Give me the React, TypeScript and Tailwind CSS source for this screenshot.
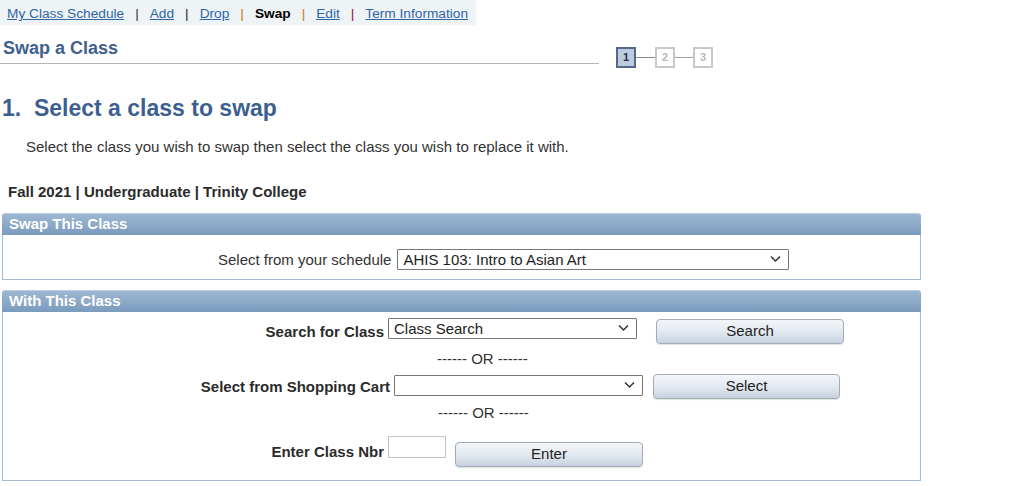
import React from "react";

function Chevron() {
  return (
    <svg
      className="pointer-events-none absolute right-[8px] top-1/2 -translate-y-1/2"
      width="11"
      height="7"
      viewBox="0 0 11 7"
    >
      <path d="M1 1 L5.5 5.5 L10 1" fill="none" stroke="#333" strokeWidth="1.5" />
    </svg>
  );
}

function Select({ w, h, value }: { w: string; h: string; value: string }) {
  return (
    <div className={`relative ${w} ${h}`}>
      <div className="h-full w-full border border-[#767676] bg-white pl-[5px] pr-[22px] flex items-center text-[15px] text-[#222] leading-none rounded-[1px]">
        {value}
      </div>
      <Chevron />
    </div>
  );
}

function Btn({ label, w }: { label: string; w: string }) {
  return (
    <div
      className={`${w} h-[25px] rounded-[4px] border border-[#a3acb6] bg-gradient-to-b from-[#f3f6f9] via-[#e3e9f0] to-[#c8d3df] shadow-[0_1px_1px_rgba(0,0,0,0.12)] flex items-center justify-center text-[15px] text-[#222]`}
    >
      {label}
    </div>
  );
}

function PanelHeader({ title }: { title: string }) {
  return (
    <div className="h-[22px] rounded-t-[3px] bg-gradient-to-b from-[#9db7d1] to-[#7b9bbd] pl-[7px] flex items-center text-white font-bold text-[15px] border-t border-[#b9cde0]">
      {title}
    </div>
  );
}

export default function App() {
  const sep = "mx-[11px]";
  return (
    <div className="w-[1033px] h-[486px] bg-white font-['Liberation_Sans',Arial,sans-serif] text-[15px] text-[#333] overflow-hidden">
      {/* nav */}
      <div className="w-[476px] h-[25px] bg-[#eef3f5] pl-[7px] flex items-center text-[13.7px] pt-[4px]">
        <a className="text-[#2e65a8] underline">My Class Schedule</a>
        <span className={`${sep} text-[#333]`}>|</span>
        <a className="text-[#2e65a8] underline">Add</a>
        <span className={`${sep} text-[#222]`}>|</span>
        <a className="text-[#2e65a8] underline">Drop</a>
        <span className={`${sep} text-[#c27a1a]`}>|</span>
        <span className="font-bold text-black">Swap</span>
        <span className={`${sep} text-[#c27a1a]`}>|</span>
        <a className="text-[#2e65a8] underline">Edit</a>
        <span className={`${sep} text-[#8b1538]`}>|</span>
        <a className="text-[#2e65a8] underline">Term Information</a>
      </div>

      {/* title row */}
      <div className="flex items-start mt-[12px]">
        <div className="w-[599px] border-b border-[#b5b5b5] pl-[3px] pb-[4px] text-[18px] leading-[22px] font-bold text-[#40608e]">
          Swap a Class
        </div>
        <div className="ml-[17px] mt-[10px] flex items-center">
          <div className="w-[20px] h-[21px] border-2 border-[#52698c] bg-[#bdcbdd] flex items-center justify-center text-[11px] font-bold text-[#1f2f4f] leading-none">
            1
          </div>
          <div className="w-[19px] h-px bg-[#8a8a8a]" />
          <div className="w-[20px] h-[21px] border-2 border-[#c9c9c9] bg-white flex items-center justify-center text-[11px] font-bold text-[#b9b9b9] leading-none">
            2
          </div>
          <div className="w-[18px] h-px bg-[#a0a0a0]" />
          <div className="w-[20px] h-[21px] border-2 border-[#c9c9c9] bg-white flex items-center justify-center text-[11px] font-bold text-[#b9b9b9] leading-none">
            3
          </div>
        </div>
      </div>

      {/* heading */}
      <div className="mt-[26px] pl-[2px] text-[23px] leading-[28px] font-bold text-[#3d5f8f] whitespace-pre">
        {"1.  Select a class to swap"}
      </div>

      <div className="mt-[17px] pl-[26px] leading-[16px]">
        Select the class you wish to swap then select the class you wish to replace it with.
      </div>

      <div className="mt-[29px] pl-[8px] leading-[16px] font-bold text-[#2b2b2b]">
        Fall 2021 | Undergraduate | Trinity College
      </div>

      {/* panel 1 */}
      <div className="mt-[13px] ml-[2px] w-[919px]">
        <PanelHeader title="Swap This Class" />
        <div className="border border-t-0 border-[#a2bdd8] pl-[215px] pt-[12px] pb-[7px] flex items-center">
          <span className="mr-[6px] mt-[2px]">Select from your schedule</span>
          <Select w="w-[392px]" h="h-[21px]" value="AHIS 103: Intro to Asian Art" />
        </div>
      </div>

      {/* panel 2 */}
      <div className="mt-[10px] ml-[2px] w-[919px]">
        <PanelHeader title="With This Class" />
        <div className="border border-t-0 border-[#a2bdd8] pt-[6px] pb-[13px]">
          <div className="flex items-start">
            <div className="w-[381px] text-right font-bold text-[#2b2b2b] leading-[16px] mt-[6px]">
              Search for Class
            </div>
            <div className="ml-[4px]">
              <Select w="w-[249px]" h="h-[21px]" value="Class Search" />
            </div>
            <div className="ml-[19px] mt-[1px]">
              <Btn label="Search" w="w-[188px]" />
            </div>
          </div>

          <div className="mt-[7px] pl-[434px] leading-[16px]">------ OR ------</div>

          <div className="flex items-start mt-[7px]">
            <div className="w-[387px] text-right font-bold text-[#2b2b2b] leading-[16px] mt-[5px]">
              Select from Shopping Cart
            </div>
            <div className="ml-[4px] mt-[1px]">
              <Select w="w-[249px]" h="h-[21px]" value="" />
            </div>
            <div className="ml-[10px]">
              <Btn label="Select" w="w-[187px]" />
            </div>
          </div>

          <div className="mt-[6px] pl-[435px] leading-[16px]">------ OR ------</div>

          <div className="flex items-start mt-[15px]">
            <div className="w-[381px] text-right font-bold text-[#2b2b2b] leading-[16px] mt-[8px]">
              Enter Class Nbr
            </div>
            <div className="ml-[4px] w-[58px] h-[22px] border border-[#c4c4c4] bg-white" />
            <div className="ml-[9px] mt-[6px]">
              <Btn label="Enter" w="w-[188px]" />
            </div>
          </div>
        </div>
      </div>
    </div>
  );
}
